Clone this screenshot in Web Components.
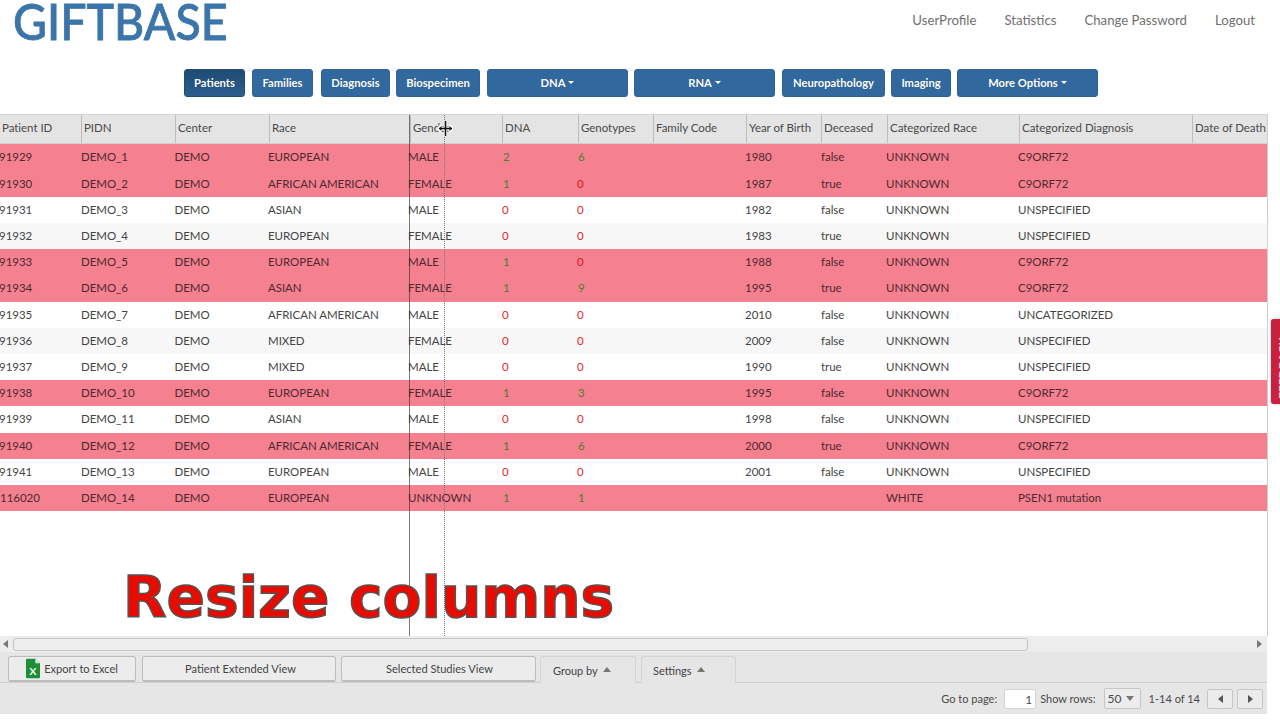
<!DOCTYPE html>
<html><head><meta charset="utf-8"><title>GIFTBASE</title>
<style>
html,body{margin:0;padding:0;background:#fff}
body{font-family:"Lato","Liberation Sans",sans-serif;width:1280px;height:720px;overflow:hidden;position:relative}
</style></head><body>
<gb-header></gb-header>
<gb-nav></gb-nav>
<gb-grid></gb-grid>
<gb-scrollbar></gb-scrollbar>
<gb-toolbar></gb-toolbar>
<gb-pager></gb-pager>
<gb-overlay></gb-overlay>
<script>
function def(name, css, html, init){
  customElements.define(name, class extends HTMLElement{
    constructor(){super();const r=this.attachShadow({mode:'open'});r.innerHTML='<style>'+css+'</style>'+html;}
    connectedCallback(){ if(init) init.call(this,this.shadowRoot); }
  });
}
def('gb-header',`
:host{display:flex;justify-content:space-between;align-items:flex-start;height:55px;width:1280px;font-family:Lato,sans-serif}
.logo{font-size:50px;line-height:42px;color:#3b75a9;font-weight:500;-webkit-text-stroke:.8px #3b75a9;margin-left:13px;transform-origin:0 0;transform:scaleX(.93)}
nav{display:flex;gap:28px;padding:12px 25px 0 0;font-size:13.2px;line-height:17px;color:#707070}
`,`<div class="logo">GIFTBASE</div><nav><span>UserProfile</span><span>Statistics</span><span>Change Password</span><span>Logout</span></nav>`);

def('gb-nav',`
:host{display:flex;padding:14px 0 17px 184px;height:28px;font-family:Lato,sans-serif}
.b{box-sizing:border-box;height:28px;border-radius:3px;background:#31699f;border:1px solid #2e6496;color:#fff;font-size:11.2px;font-weight:700;display:flex;align-items:center;justify-content:center;padding-bottom:2px;text-shadow:0 0 1px rgba(0,0,0,.25);white-space:nowrap}
.on{background:linear-gradient(#1f4a73,#2b5f90);border-color:#204d74}
i{display:inline-block;width:0;height:0;border:3px solid transparent;border-top:3.5px solid #fff;border-bottom:0;margin:1px 0 0 3px}
`,[['Patients',61,7],['Families',61,8],['Diagnosis',69,6],['Biospecimen',84,7],['DNA',141,6,1],['RNA',141,7,1],['Neuropathology',103,6],['Imaging',60,6],['More Options',141,0,1]].map((b,i)=>`<div class="b${i==0?' on':''}" style="width:${b[1]}px;margin-right:${b[2]}px">${b[0]}${b[3]?'<i></i>':''}</div>`).join(''));

const COLS='81px 93.5px 93.5px 140px 94px 75px 75px 93px 76px 65px 132px 174px 75px';
const HCOLS='82px 94px 94px 141px 92px 76px 75px 93px 75px 66px 132px 173px 74px';
def('gb-row',`
:host{display:grid;grid-template-columns:${COLS};height:26.23px;font-size:11.5px;letter-spacing:-.04px;line-height:26px;color:#444;background:#fff;white-space:nowrap}
:host([pink]){background:#f5808f;color:#4e2a30}
:host([alt]){background:#f7f7f7}
.g{color:#2f9a33}.r{color:#ea1f2f}
:host([pink]) .g{color:#4f7f2e}
:host([pink]) .r{color:#e3142c}
`,``,function(r){
  const d=JSON.parse(this.dataset.v);
  const num=v=>v===''?'':`<span class="${v==='0'?'r':'g'}" style="padding-left:${v==='0'?0:1}px">${v}</span>`;
  const cells=[d[0],d[1],'DEMO',d[2],d[3],num(d[4]),num(d[5]),'',d[6],d[7],d[8],d[9],''];
  const st=r.querySelector('style').outerHTML;
  r.innerHTML=st+cells.map((c,i)=>`<div${i==0&&d[0].length==5?' style="margin-left:-1px"':''}>${c}</div>`).join('');
});
def('gb-grid',`
:host{display:block;box-sizing:border-box;width:1268px;height:522px;border-top:1px solid #d5d5d5;border-right:1px solid #cfcfcf;background:#fff;overflow:hidden}
.h{display:grid;grid-template-columns:${HCOLS};height:29.3px;background:#e4e4e4;font-size:11.5px;letter-spacing:-.04px;line-height:26px;color:#4a4a4a;white-space:nowrap;border-bottom:1px solid #d2d2d2;box-sizing:border-box}
.h div{border-right:1px solid #bdbdbd;padding-left:2px;box-sizing:border-box}
.h div:last-child{border:0}
`,`<div class="h" id="h"></div><div id="b"></div>`,function(r){
  r.getElementById('h').innerHTML=['Patient ID','PIDN','Center','Race','Gender','DNA','Genotypes','Family Code','Year of Birth','Deceased','Categorized Race','Categorized Diagnosis','Date of Death'].map(t=>`<div>${t}</div>`).join('');
  const A='AFRICAN AMERICAN',E='EUROPEAN',S='ASIAN',M='MIXED',U='UNKNOWN',C='C9ORF72',N='UNSPECIFIED';
  const D=[
  ['91929','DEMO_1',E,'MALE','2','6','1980','false',U,C,1],
  ['91930','DEMO_2',A,'FEMALE','1','0','1987','true',U,C,1],
  ['91931','DEMO_3',S,'MALE','0','0','1982','false',U,N],
  ['91932','DEMO_4',E,'FEMALE','0','0','1983','true',U,N],
  ['91933','DEMO_5',E,'MALE','1','0','1988','false',U,C,1],
  ['91934','DEMO_6',S,'FEMALE','1','9','1995','true',U,C,1],
  ['91935','DEMO_7',A,'MALE','0','0','2010','false',U,'UNCATEGORIZED'],
  ['91936','DEMO_8',M,'FEMALE','0','0','2009','false',U,N],
  ['91937','DEMO_9',M,'MALE','0','0','1990','true',U,N],
  ['91938','DEMO_10',E,'FEMALE','1','3','1995','false',U,C,1],
  ['91939','DEMO_11',S,'MALE','0','0','1998','false',U,N],
  ['91940','DEMO_12',A,'FEMALE','1','6','2000','true',U,C,1],
  ['91941','DEMO_13',E,'MALE','0','0','2001','false',U,N],
  ['116020','DEMO_14',E,'UNKNOWN','1','1','','','WHITE','PSEN1 mutation',1]];
  const b=r.getElementById('b');
  D.forEach((d,i)=>{const e=document.createElement('gb-row');e.dataset.v=JSON.stringify(d);
    if(d[10])e.setAttribute('pink','');else if(i%2)e.setAttribute('alt','');b.appendChild(e);});
});
def('gb-scrollbar',`
:host{display:flex;align-items:center;box-sizing:border-box;width:1267px;height:16px;background:#ededed;padding:0 5px 0 3px}
.t{box-sizing:border-box;flex:none;width:1015px;height:13px;margin-left:5px;border:1px solid #c4c4c4;border-radius:3px;background:#eee}
s{flex:1}
svg{flex:none;display:block}
`,`<svg width="5" height="8" viewBox="0 0 5 8"><path d="M5 0L0 4l5 4z" fill="#777"/></svg><div class="t"></div><s></s><svg width="5" height="8" viewBox="0 0 5 8"><path d="M0 0l5 4-5 4z" fill="#777"/></svg>`);
def('gb-toolbar',`
:host{display:flex;box-sizing:border-box;width:1267px;height:31px;background:#e6e6e6;border-bottom:1px solid #cfcfcf;padding:4px 0 0 8px;font-size:11.1px;color:#444;font-family:Lato,sans-serif}
.b{box-sizing:border-box;height:26px;border:1px solid #bdbdbd;border-bottom:2px solid #bdbdbd;border-radius:3px;background:#ececec;display:flex;align-items:center;justify-content:center;white-space:nowrap}
.tab{box-sizing:border-box;height:27px;border:1px solid #d4d4d4;border-bottom:0;border-radius:3px 3px 0 0;background:#e6e6e6;display:flex;align-items:center;padding:0 0 0 12px;white-space:nowrap;font-size:11px}
i{display:inline-block;width:0;height:0;border:4px solid transparent;border-bottom:5px solid #777;border-top:0;margin:0 0 2px 5px}
svg{margin-right:4px}
`,`<div class="b" style="width:128px;margin-right:6px"><svg width="14" height="21" viewBox="0 0 15 21"><path d="M0 1a1 1 0 0 1 1-1h9l5 5v15a1 1 0 0 1-1 1H1a1 1 0 0 1-1-1z" fill="#1f8f35"/><path d="M10 0l5 5h-5z" fill="#d8ecd8"/><text x="7.5" y="18" font-family="Lato,sans-serif" font-size="11" font-weight="700" fill="#fff" text-anchor="middle">X</text></svg>Export to Excel</div>
<div class="b" style="width:194px;margin-right:5px;padding-left:3px">Patient Extended View</div>
<div class="b" style="width:195px;margin-right:4px;padding-left:2px">Selected Studies View</div>
<div class="tab" style="width:96px;margin-right:5px">Group by<i></i></div>
<div class="tab" style="width:95px;padding-left:11px">Settings<i></i></div>`);
def('gb-pager',`
:host{display:flex;align-items:center;justify-content:flex-end;box-sizing:border-box;width:1267px;height:31px;background:#e6e6e6;padding:0 4px 0 0;font-size:11px;color:#4a4a4a;font-family:Lato,sans-serif;white-space:nowrap}
.in{box-sizing:border-box;width:32px;height:20px;background:#fff;border:1px solid #d5d5d5;border-radius:2px;text-align:right;padding-right:3px;line-height:19px;font-size:12px;margin:0 4px 0 7px}
.sel{box-sizing:border-box;width:37px;height:21px;border:1px solid #c6c6c6;border-radius:2px;background:#ececec;display:flex;align-items:center;justify-content:space-between;padding:0 6px 0 3px;margin:0 8px;font-size:12px}
.sel i{width:0;height:0;border:4.5px solid transparent;border-top:5px solid #777;border-bottom:0}
.n{box-sizing:border-box;width:26px;height:20px;border:1px solid #c6c6c6;border-radius:2px;background:#ececec;display:flex;align-items:center;justify-content:center}
`,`<span>Go to page:</span><div class="in">1</div><span>Show rows:</span><div class="sel">50<i></i></div><span style="margin-right:7px">1-14 of 14</span>
<div class="n" style="margin-right:4px"><svg width="5" height="8" viewBox="0 0 5 8"><path d="M5 0L0 4l5 4z" fill="#555"/></svg></div>
<div class="n"><svg width="5" height="8" viewBox="0 0 5 8"><path d="M0 0l5 4-5 4z" fill="#555"/></svg></div>`);
def('gb-overlay',`
:host{position:absolute;left:0;top:0;width:1280px;height:720px;pointer-events:none}
.l1{position:absolute;left:409px;top:115px;height:521px;width:1px;background:rgba(50,50,50,.65)}
.l2{position:absolute;left:444px;top:115px;height:521px;width:0;border-left:1px dotted #777}
.c{position:absolute;left:438px;top:121px}
.cap{position:absolute;left:123px;top:561px;font:700 56.6px/72px "DejaVu Sans",sans-serif;color:#e80c00;-webkit-text-stroke:1.5px #5a5050;white-space:pre}
.tab{position:absolute;left:1271px;top:319px;width:12px;height:85px;background:#c8203f;border-radius:3px;box-shadow:0 0 2px #999;overflow:hidden}
.tab span{position:absolute;left:6px;top:80px;transform-origin:0 0;transform:rotate(-90deg);font:700 12px/12px Lato,sans-serif;color:#f3c9cf;white-space:nowrap}
`,`<div class="l1"></div><div class="l2"></div>
<svg class="c" width="15" height="15" viewBox="0 0 15 15"><path d="M7.5 0v15M1 7.5h13M3.5 4.5l-3 3 3 3M11.5 4.5l3 3-3 3" fill="none" stroke="#fff" stroke-width="3.4"/><path d="M7.5 0v15M1 7.5h13" fill="none" stroke="#111" stroke-width="1.6"/><path d="M3.5 5L1 7.5 3.5 10zM11.5 5L14 7.5 11.5 10z" fill="#111"/></svg>
<div class="cap">Resize columns</div><div class="tab"><span>FEEDBACK</span></div>`);
</script>
</body></html>
